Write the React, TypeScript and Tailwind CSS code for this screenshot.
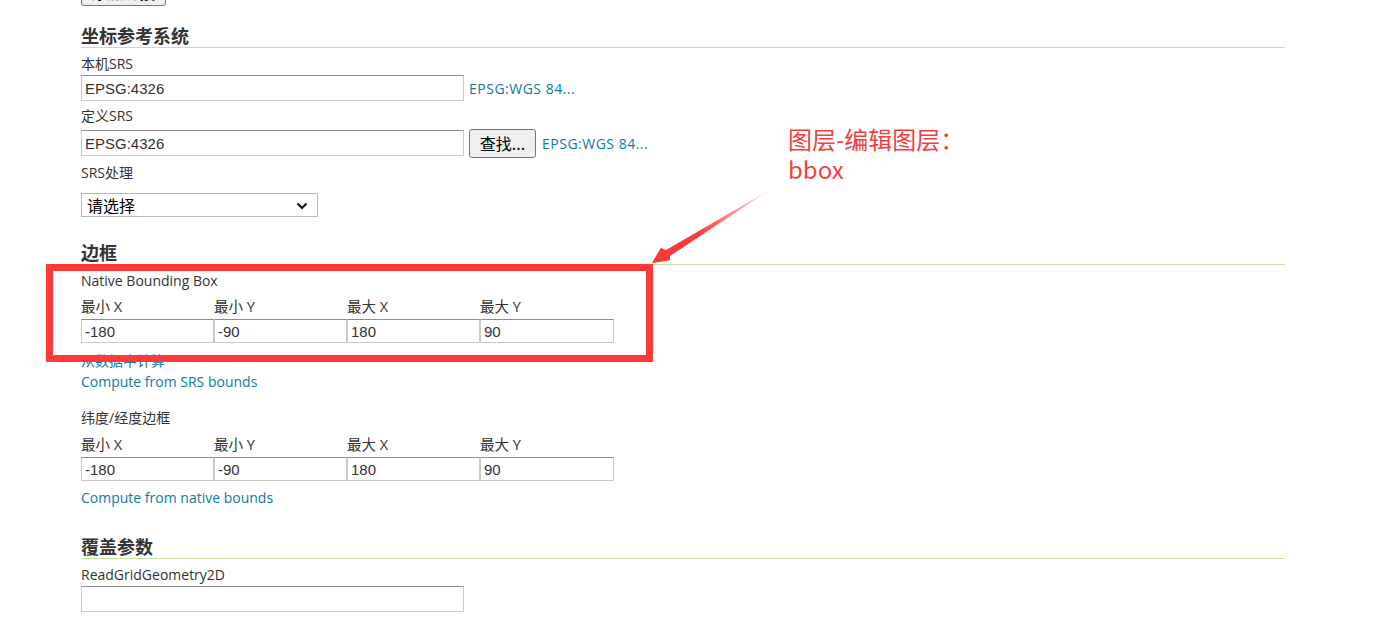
import React from "react";

const FONT = "font-['Open_Sans','Noto_Sans_CJK_SC',sans-serif]";
const INPUT =
  "block border border-[#c9c9c9] border-t-[#8c8c8c] bg-white px-[3px] text-[15px] text-[#333] font-['Liberation_Sans','Noto_Sans_CJK_SC',sans-serif] outline-none";

function Heading({ children, mt }: { children: React.ReactNode; mt: string }) {
  return (
    <div
      className={`${mt} h-[25px] border-b border-[#c9e2a4] text-[18px] font-bold leading-[24px] text-[#333] font-['Noto_Sans_CJK_SC',sans-serif]`}
    >
      {children}
    </div>
  );
}

function Label({ children, mt }: { children: React.ReactNode; mt: string }) {
  return <div className={`${mt} h-[20px] text-[14px] leading-[20px] text-[#333]`}>{children}</div>;
}

function LinkText({ children, mt }: { children: React.ReactNode; mt: string }) {
  return <div className={`${mt} h-[20px] text-[14px] leading-[20px] text-[#0d7aa8]`}>{children}</div>;
}

function BBox({ values, mtLabels }: { values: string[]; mtLabels: string }) {
  const labels = ["最小 X", "最小 Y", "最大 X", "最大 Y"];
  return (
    <>
      <div className={`${mtLabels} flex h-[20px] text-[14.5px] leading-[20px] text-[#333]`}>
        {labels.map((l, i) => (
          <div key={l} className={i === 3 ? "w-[134px]" : "w-[133px]"}>
            {l}
          </div>
        ))}
      </div>
      <div className="mt-[2px] flex">
        {values.map((v, i) => (
          <input
            key={i}
            readOnly
            value={v}
            className={`${INPUT} h-[24px] ${i === 3 ? "w-[134px]" : "w-[133px]"}`}
          />
        ))}
      </div>
    </>
  );
}

export default function App() {
  return (
    <div className={`relative h-[622px] w-[1374px] overflow-hidden bg-white ${FONT}`}>
      <div className="w-[1285px] pl-[81px]">
        <button className="mt-[-23px] block h-[29px] w-[85px] rounded-[3px] border border-[#767676] bg-[#efefef] text-[16px] text-black font-['Noto_Sans_CJK_SC',sans-serif]">
          添加链接
        </button>

        <Heading mt="mt-[17px]">坐标参考系统</Heading>
        <Label mt="mt-[6px]">本机SRS</Label>
        <div className="mt-[1px] flex h-[26px] items-center">
          <input readOnly value="EPSG:4326" className={`${INPUT} h-[26px] w-[383px]`} />
          <span className="ml-[5px] text-[14px] tracking-[0.5px] text-[#0d7aa8]">EPSG:WGS 84...</span>
        </div>
        <Label mt="mt-[5px]">定义SRS</Label>
        <div className="mt-[4px] flex h-[26px] items-center">
          <input readOnly value="EPSG:4326" className={`${INPUT} h-[26px] w-[383px]`} />
          <button className="ml-[5px] h-[29px] w-[67px] shrink-0 rounded-[3px] border border-[#767676] bg-[#efefef] text-[16px] leading-[27px] text-black font-['Noto_Sans_CJK_SC',sans-serif]">
            查找...
          </button>
          <span className="ml-[6px] text-[14px] tracking-[0.5px] text-[#0d7aa8]">EPSG:WGS 84...</span>
        </div>
        <Label mt="mt-[7px]">SRS处理</Label>
        <div className="mt-[10px] flex h-[24px] w-[237px] items-center justify-between border border-[#b8b8b8] bg-white pl-[5px] pr-[9px] text-[16px] text-black font-['Noto_Sans_CJK_SC',sans-serif]">
          <span className="leading-[22px]">请选择</span>
          <svg width="12" height="8" viewBox="0 0 12 8" className="mt-[1px]">
            <path d="M1.5 1.5 L6 6 L10.5 1.5" fill="none" stroke="#111" strokeWidth="2.2" />
          </svg>
        </div>

        <Heading mt="mt-[23px]">边框</Heading>
        <Label mt="mt-[6px]">Native Bounding Box</Label>
        <BBox values={["-180", "-90", "180", "90"]} mtLabels="mt-[6px]" />
        <LinkText mt="mt-[8px]">从数据中计算</LinkText>
        <LinkText mt="mt-[1px]">Compute from SRS bounds</LinkText>
        <Label mt="mt-[16px]">纬度/经度边框</Label>
        <BBox values={["-180", "-90", "180", "90"]} mtLabels="mt-[7px]" />
        <LinkText mt="mt-[7px]">Compute from native bounds</LinkText>

        <Heading mt="mt-[26px]">覆盖参数</Heading>
        <Label mt="mt-[6px]">ReadGridGeometry2D</Label>
        <input readOnly value="" className={`${INPUT} mt-[1px] h-[26px] w-[383px]`} />
      </div>

      {/* annotation overlay */}
      <div className="pointer-events-none absolute left-[46px] top-[264px] h-[98px] w-[607px] border-[7px] border-[#fd3a3a]" />
      <div className="pointer-events-none absolute left-[788px] top-[124px] text-[24px] text-[#f43f3f] font-['Noto_Sans_CJK_SC',sans-serif]">
        <div className="h-[30px] leading-[30px]">图层-编辑图层：</div>
        <div className="h-[30px] leading-[30px]">bbox</div>
      </div>
      <svg
        className="pointer-events-none absolute left-[640px] top-[185px]"
        width="140"
        height="90"
        viewBox="640 185 140 90"
      >
        <defs>
          <linearGradient id="ag" x1="768" y1="191" x2="700" y2="235" gradientUnits="userSpaceOnUse">
            <stop offset="0" stopColor="#fd3a3a" stopOpacity="0.15" />
            <stop offset="1" stopColor="#fd3a3a" stopOpacity="1" />
          </linearGradient>
        </defs>
        <polygon points="768,191 666,250 661,248 652,263 670,260 670,256" fill="url(#ag)" />
        <polygon points="661,248 652,263 670,260 667,253" fill="#fd3a3a" />
      </svg>
    </div>
  );
}
